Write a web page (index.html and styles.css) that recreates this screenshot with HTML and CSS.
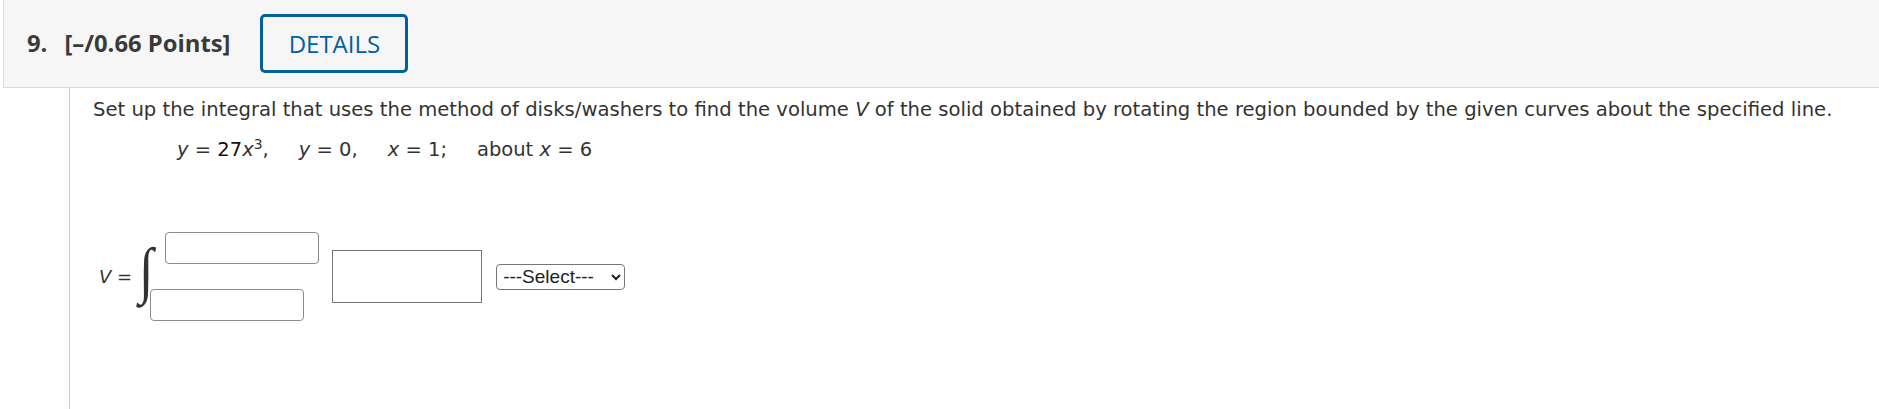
FILE: index.html
```html
<!DOCTYPE html>
<html lang="en">
<head>
<meta charset="utf-8">
<title>Question 9</title>
<link rel="stylesheet" href="styles.css">
</head>
<body>
<div class="question">
  <div class="q-header">
    <span class="q-num">9.</span>
    <span class="q-points">[–/0.66 Points]</span>
    <button class="details-btn" type="button">DETAILS</button>
  </div>
  <div class="q-body">
    <p class="prompt">Set up the integral that uses the method of disks/washers to find the volume <i>V</i> of the solid obtained by rotating the region bounded by the given curves about the specified line.</p>
    <p class="math-line">
      <span class="eq"><i>y</i> = <span class="num">27</span><i>x</i><sup>3</sup>,</span>
      <span class="eq"><i>y</i> = 0,</span>
      <span class="eq"><i>x</i> = 1;</span>
      <span class="eq">about <i>x</i> = 6</span>
    </p>
    <div class="answer-row">
      <span class="v-label"><i>V</i> =</span>
      <span class="integral">
        <span class="int-sign">∫</span>
        <span class="limits">
          <input class="limit upper" type="text" aria-label="upper limit">
          <input class="limit lower" type="text" aria-label="lower limit">
        </span>
      </span>
      <input class="integrand" type="text" aria-label="integrand">
      <select class="var-select" aria-label="variable">
        <option>---Select---</option>
        <option>dx</option>
        <option>dy</option>
      </select>
    </div>
  </div>
</div>
</body>
</html>
```
FILE: styles.css
```css
* { box-sizing: border-box; }

html, body {
  margin: 0;
  padding: 0;
  background: #ffffff;
  height: 100%;
}

body {
  font-family: "Open Sans", "Liberation Sans", sans-serif;
  color: #333333;
  overflow: hidden;
}

.question {
  display: flex;
  flex-direction: column;
  height: 409px;
}

.q-header {
  margin-left: 3px;
  height: 88px;
  flex: none;
  display: flex;
  align-items: center;
  background: #f6f6f6;
  border-left: 1px solid #dcdcdc;
  border-bottom: 1px solid #dcdcdc;
  padding-left: 23px;
  padding-bottom: 1px;
}

.q-num,
.q-points {
  font-family: "Open Sans", sans-serif;
  font-weight: 700;
  font-size: 23.8px;
  color: #3a3a3a;
}

.q-points {
  margin-left: 17px;
}

.details-btn {
  margin-left: 30px;
  width: 148px;
  height: 59px;
  border: 3px solid #00629c;
  border-radius: 5px;
  background: transparent;
  color: #00629c;
  font-family: "Open Sans", sans-serif;
  font-size: 24px;
  font-weight: 400;
  padding: 0;
}

.q-body {
  flex: 1;
  margin-left: 69px;
  border-left: 1px solid #cccccc;
  padding-left: 23px;
  font-family: "DejaVu Sans", sans-serif;
  font-size: 19.6px;
  color: #333333;
}

.prompt {
  margin: 10px 0 0 0;
  line-height: 24px;
}

.math-line {
  margin: 16px 0 0 84px;
  line-height: 24px;
  display: flex;
  font-size: 19.5px;
}

.eq + .eq {
  margin-left: 30px;
}

.num { color: #111; }

.math-line sup {
  font-size: 14px;
  line-height: 0;
}

.answer-row {
  margin-top: 70px;
  display: flex;
  align-items: center;
  padding-left: 6px;
}

.v-label {
  font-size: 18px;
  margin-right: 7px;
}

.integral {
  display: flex;
  align-items: center;
}

.int-sign {
  font-family: "Liberation Serif", "DejaVu Serif", serif;
  font-size: 62px;
  line-height: 56px;
  width: 11px;
  color: #333;
  display: inline-block;
  transform: translateY(-7px) scaleX(0.85);
  transform-origin: left center;
}

.limits {
  display: flex;
  flex-direction: column;
  align-items: flex-start;
  gap: 25px;
}

.limit {
  height: 32px;
  width: 154px;
  border: 1px solid #8c8c8c;
  border-radius: 4px;
  background: #fff;
  padding: 0;
}

.limit.upper { margin-left: 15px; }

.integrand {
  margin-left: 13px;
  width: 150px;
  height: 53px;
  border: 1px solid #767676;
  border-radius: 0;
  background: #fff;
  padding: 0;
}

.var-select {
  margin-left: 14px;
  width: 129px;
  height: 26px;
  font-family: "Liberation Sans", Arial, sans-serif;
  font-size: 19px;
  color: #222;
  border: 1px solid #767676;
  border-radius: 4px;
  background: #fff;
  padding: 0 2px;
}
```
